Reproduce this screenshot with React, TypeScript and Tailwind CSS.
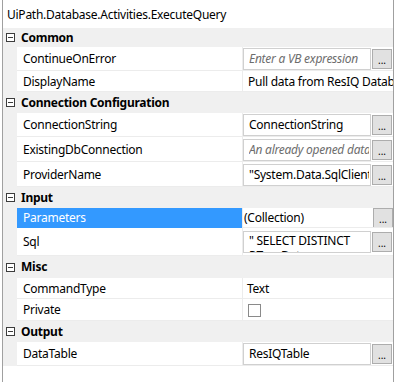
import React from 'react'

type Prop = {
  name: string
  h: string
  value: React.ReactNode
  selected?: boolean
}

type Category = {
  title: string
  h: string
  props: Prop[]
}

function TextBox({ children, italic }: { children: React.ReactNode; italic?: boolean }) {
  return (
    <div
      className={
        'w-[128px] h-[22px] shrink-0 border border-[#d0d0d0] bg-white pl-[5px] flex items-center overflow-hidden whitespace-nowrap ' +
        (italic ? 'italic text-[#6d6d6d]' : 'text-black')
      }
    >
      <span className="block w-[120px] overflow-hidden">{children}</span>
    </div>
  )
}

function DotsButton() {
  return (
    <div className="ml-[1px] w-[20px] h-[20px] shrink-0 border border-[#adadad] bg-[#e1e1e1] flex items-end justify-center pb-[3px] text-[10px] leading-none tracking-normal text-black">
      ...
    </div>
  )
}

function BoxWithButton({ children, italic }: { children: React.ReactNode; italic?: boolean }) {
  return (
    <div className="flex items-center">
      <TextBox italic={italic}>{children}</TextBox>
      <DotsButton />
    </div>
  )
}

const categories: Category[] = [
  {
    title: 'Common',
    h: 'h-[19px]',
    props: [
      { name: 'ContinueOnError', h: 'h-[24px]', value: <BoxWithButton italic>Enter a VB expression</BoxWithButton> },
      {
        name: 'DisplayName',
        h: 'h-[21px]',
        value: <span className="block w-[150px] overflow-hidden pl-[5px] whitespace-nowrap">Pull data from ResIQ Database</span>,
      },
    ],
  },
  {
    title: 'Connection Configuration',
    h: 'h-[21px]',
    props: [
      { name: 'ConnectionString', h: 'h-[24px]', value: <BoxWithButton>ConnectionString</BoxWithButton> },
      { name: 'ExistingDbConnection', h: 'h-[25px]', value: <BoxWithButton italic>An already opened database connection</BoxWithButton> },
      { name: 'ProviderName', h: 'h-[25px]', value: <BoxWithButton>"System.Data.SqlClient"</BoxWithButton> },
    ],
  },
  {
    title: 'Input',
    h: 'h-[21px]',
    props: [
      {
        name: 'Parameters',
        h: 'h-[20px]',
        selected: true,
        value: (
          <div className="flex items-center w-full">
            <span className="pl-[1px] w-[129px]">(Collection)</span>
            <DotsButton />
          </div>
        ),
      },
      {
        name: 'Sql',
        h: 'h-[28px]',
        value: (
          <div className="flex items-center">
            <div className="w-[128px] h-[22px] shrink-0 border border-[#d0d0d0] bg-white pl-[5px] pt-[1px] overflow-hidden whitespace-nowrap leading-[15px]">
              <div>" SELECT DISTINCT</div>
              <div>P.TourDate,</div>
            </div>
            <DotsButton />
          </div>
        ),
      },
    ],
  },
  {
    title: 'Misc',
    h: 'h-[22px]',
    props: [
      { name: 'CommandType', h: 'h-[21px]', value: <span className="pl-[4px]">Text</span> },
      {
        name: 'Private',
        h: 'h-[22px]',
        value: <div className="ml-[5px] w-[13px] h-[13px] border border-[#8a8a8a] bg-white" />,
      },
    ],
  },
  {
    title: 'Output',
    h: 'h-[21px]',
    props: [{ name: 'DataTable', h: 'h-[24px]', value: <BoxWithButton>ResIQTable</BoxWithButton> }],
  },
]

function CollapseBox() {
  return (
    <div className="ml-[3px] w-[9px] h-[9px] shrink-0 border border-[#3c3c3c] bg-white flex items-center justify-center">
      <div className="w-[5px] h-[1px] bg-[#3c3c3c]" />
    </div>
  )
}

export default function App() {
  return (
    <div className="w-[402px] h-[382px] bg-white overflow-hidden pl-[2px] text-[12px] tracking-[-0.25px] text-black font-['Segoe_UI','Noto_Sans',sans-serif]">
      <div className="w-[392px] h-full border-x border-[#a0a0a0] flex flex-col">
        <div className="h-[28px] shrink-0 flex items-center pl-[4px] pt-[1px] whitespace-nowrap">
          UiPath.Database.Activities.ExecuteQuery
        </div>

        {categories.map((cat) => (
          <div key={cat.title}>
            <div className={cat.h + ' bg-[#f0f0f0] flex items-center'}>
              <CollapseBox />
              <span className="ml-[6px] font-bold whitespace-nowrap">{cat.title}</span>
            </div>
            {cat.props.map((p) => (
              <div key={p.name} className={p.h + ' flex'}>
                <div className="w-[14px] shrink-0 bg-[#f0f0f0]" />
                <div
                  className={
                    'w-[225px] shrink-0 flex items-center pl-[6px] pt-[1px] border-b ' +
                    (p.selected ? 'bg-[#3399ff] text-white border-[#3399ff]' : 'bg-white border-[#ececec]')
                  }
                >
                  {p.name}
                </div>
                <div className="w-[1px] shrink-0 bg-[#ececec]" />
                <div className="w-[150px] shrink-0 flex items-center overflow-hidden bg-white pt-[1px] border-b border-[#ececec]">
                  {p.value}
                </div>
              </div>
            ))}
          </div>
        ))}
      </div>
    </div>
  )
}
